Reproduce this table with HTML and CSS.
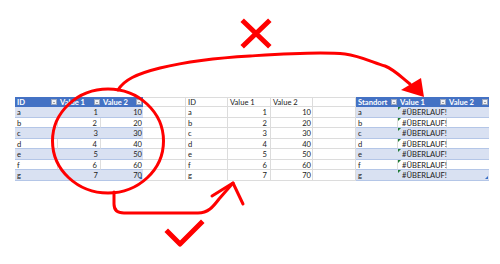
FILE: index.html
```html
<!DOCTYPE html>
<html>
<head>
<meta charset="utf-8">
<link rel="stylesheet" href="styles.css">
</head>
<body>
<div class="page">
  <div class="sheet">
    <div class="xtable t1">
      <div class="hd"><span>ID</span><i class="flt"></i></div>
      <div class="hd"><span>Value 1</span><i class="flt"></i></div>
      <div class="hd"><span>Value 2</span><i class="flt"></i></div>

      <div class="c band">a</div><div class="c band num n1">1</div><div class="c band num n2">10</div>
      <div class="c wh">b</div><div class="c wh num n1">2</div><div class="c wh num n2 last">20</div>
      <div class="c band">c</div><div class="c band num n1">3</div><div class="c band num n2">30</div>
      <div class="c wh">d</div><div class="c wh num n1">4</div><div class="c wh num n2 last">40</div>
      <div class="c band">e</div><div class="c band num n1">5</div><div class="c band num n2">50</div>
      <div class="c wh">f</div><div class="c wh num n1">6</div><div class="c wh num n2 last">60</div>
      <div class="c band">g</div><div class="c band num n1">7</div><div class="c band num n2 corner">70</div>
    </div>

    <div class="plain">
      <div class="p"></div><div class="p">ID</div><div class="p">Value 1</div><div class="p">Value 2</div><div class="p"></div>
      <div class="p"></div><div class="p">a</div><div class="p num n1">1</div><div class="p num n2">10</div><div class="p"></div>
      <div class="p"></div><div class="p">b</div><div class="p num n1">2</div><div class="p num n2">20</div><div class="p"></div>
      <div class="p"></div><div class="p">c</div><div class="p num n1">3</div><div class="p num n2">30</div><div class="p"></div>
      <div class="p"></div><div class="p">d</div><div class="p num n1">4</div><div class="p num n2">40</div><div class="p"></div>
      <div class="p"></div><div class="p">e</div><div class="p num n1">5</div><div class="p num n2">50</div><div class="p"></div>
      <div class="p"></div><div class="p">f</div><div class="p num n1">6</div><div class="p num n2">60</div><div class="p"></div>
      <div class="p"></div><div class="p">g</div><div class="p num n1">7</div><div class="p num n2">70</div><div class="p"></div>
    </div>

    <div class="xtable t3">
      <div class="hd"><span>Standort</span><i class="flt"></i></div>
      <div class="hd"><span>Value 1</span><i class="flt"></i></div>
      <div class="hd"><span>Value 2</span><i class="flt"></i></div>

      <div class="c band">a</div><div class="c band err">#ÜBERLAUF!</div><div class="c band"></div>
      <div class="c wh">b</div><div class="c wh err">#ÜBERLAUF!</div><div class="c wh last"></div>
      <div class="c band">c</div><div class="c band err">#ÜBERLAUF!</div><div class="c band"></div>
      <div class="c wh">d</div><div class="c wh err">#ÜBERLAUF!</div><div class="c wh last"></div>
      <div class="c band">e</div><div class="c band err">#ÜBERLAUF!</div><div class="c band"></div>
      <div class="c wh">f</div><div class="c wh err">#ÜBERLAUF!</div><div class="c wh last"></div>
      <div class="c band">g</div><div class="c band err">#ÜBERLAUF!</div><div class="c band corner"></div>
    </div>
  </div>

  <svg class="marks" width="500" height="264" viewBox="0 0 500 264">
    <g fill="none" stroke="#ff0000" stroke-linecap="round" stroke-linejoin="round">
      <ellipse cx="108" cy="141" rx="55.5" ry="52" stroke-width="3"/>
      <path d="M118 90 C124 80 136 74 160 68 C185 62 215 58 250 56 C280 54 320 51 345 54 C360 56 372 62 385 66 C395 70 402 78 410 84" stroke-width="3"/>
      <path d="M244 22 L268 45 M268 22 L244 45" stroke-width="5" stroke-linecap="square"/>
      <path d="M114 192 L114 204 C114 210 117 213 124 213 L198 213 C208 213 213 207 219 199 L233 183" stroke-width="3"/>
      <path d="M212 196 L233 183 L243 204" stroke-width="3"/>
      <path d="M168 232 L180 244 L201 223" stroke-width="5" stroke-linecap="square"/>
    </g>
    <polygon points="401,90 421,78 424,97" fill="#ff0000"/>
  </svg>
</div>
</body>
</html>
```

FILE: styles.css
```css
html, body {
  margin: 0;
  padding: 0;
  background: #ffffff;
}

.page {
  position: relative;
  width: 500px;
  height: 264px;
  overflow: hidden;
  font-family: "Lato", "Liberation Sans", sans-serif;
  font-size: 7.6px;
  color: #222222;
}

.sheet {
  display: flex;
  padding-top: 97px;
  padding-left: 15px;
}

.xtable,
.plain {
  display: grid;
  grid-template-rows: 10px 11px 10px 11px 10px 11px 10px 11px;
}

.t1 {
  grid-template-columns: 43px 43px 42px;
}

.t3 {
  grid-template-columns: 42px 49px 42px;
}

.plain {
  grid-template-columns: 43px 42px 43px 42px 43px;
  grid-template-rows: 9px 11px 10px 11px 10px 11px 10px 11px;
  border-top: 1px solid #dcdcdc;
}

.hd {
  display: flex;
  align-items: center;
  justify-content: space-between;
  background: #4472c4;
  color: #ffffff;
  font-weight: 700;
  padding: 0 1px 0 2px;
}

.flt {
  display: block;
  position: relative;
  width: 6px;
  height: 6px;
  box-sizing: border-box;
  background: #eef0f4;
  border: 1px solid #9aa6bd;
}

.flt::after {
  content: "";
  position: absolute;
  left: 1px;
  top: 1.5px;
  border-left: 1px solid transparent;
  border-right: 1px solid transparent;
  border-top: 1.5px solid #555555;
}

.c {
  display: flex;
  align-items: center;
  box-sizing: border-box;
  padding-left: 2px;
  border-bottom: 1px solid #b4c6e7;
  white-space: nowrap;
  position: relative;
}

.band {
  background: #d9e1f2;
}

.wh {
  background: #ffffff;
  border-right: 1px solid #dedede;
}

.wh.last {
  border-right: none;
}

.num {
  justify-content: flex-end;
  padding-left: 0;
}

.n1 {
  padding-right: 3px;
}

.n2 {
  padding-right: 1px;
}

.corner::after {
  content: "";
  position: absolute;
  right: 1px;
  bottom: 1px;
  border-left: 3px solid transparent;
  border-bottom: 3px solid #3a6fc4;
}

.err {
  padding-left: 4px;
}

.err::before {
  content: "";
  position: absolute;
  left: 0;
  top: 0;
  border-top: 3px solid #1e7b34;
  border-right: 3px solid transparent;
}

.p {
  display: flex;
  align-items: center;
  box-sizing: border-box;
  padding-left: 2px;
  border-right: 1px solid #dcdcdc;
  border-bottom: 1px solid #dcdcdc;
  white-space: nowrap;
  color: #222222;
}

.p.num {
  justify-content: flex-end;
  padding-left: 0;
}

.marks {
  position: absolute;
  left: 0;
  top: 0;
  pointer-events: none;
}
```
